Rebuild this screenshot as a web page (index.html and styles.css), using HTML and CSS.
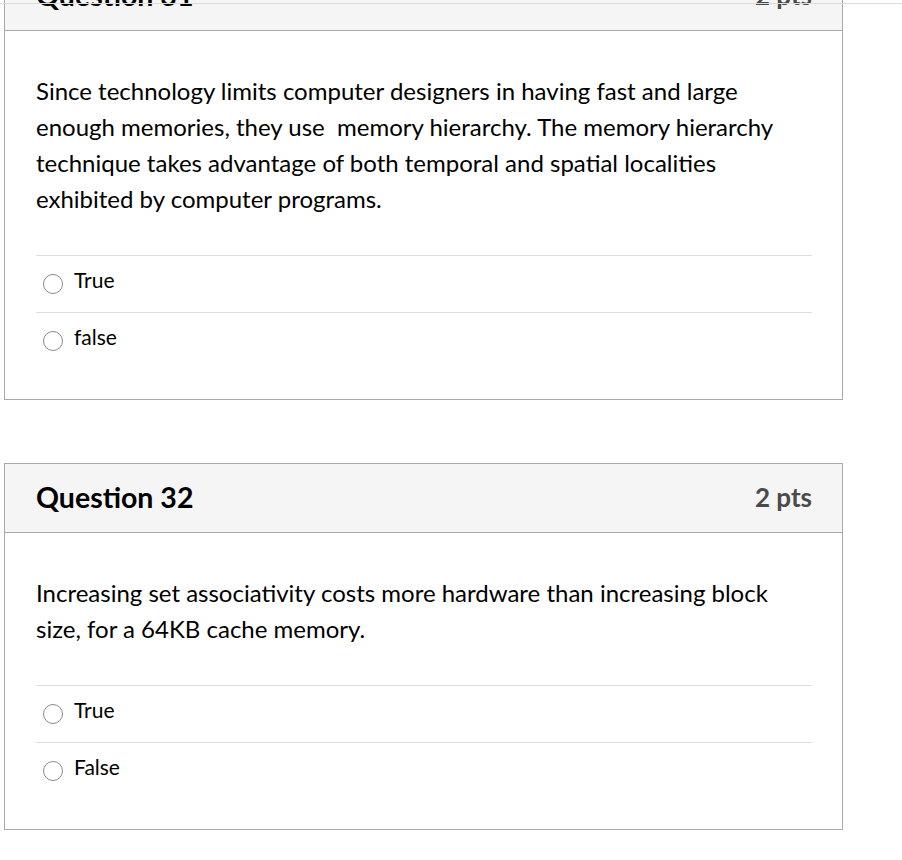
FILE: index.html
```html
<!DOCTYPE html>
<html>
<head>
<meta charset="utf-8">
<link rel="stylesheet" href="styles.css">
</head>
<body>
<div class="topbar"></div>
<div class="quiz">
  <div class="card first">
    <div class="card-header">
      <span class="title">Question 31</span>
      <span class="pts">2 pts</span>
    </div>
    <div class="card-body">
      <p class="question">Since technology limits computer designers in having fast and large enough memories, they use&nbsp; memory hierarchy. The memory hierarchy technique takes advantage of both temporal and spatial localities exhibited by computer programs.</p>
      <div class="answers">
        <label class="answer"><span class="radio"></span><span class="label">True</span></label>
        <label class="answer"><span class="radio"></span><span class="label">false</span></label>
      </div>
    </div>
  </div>
  <div class="card">
    <div class="card-header">
      <span class="title">Question 32</span>
      <span class="pts">2 pts</span>
    </div>
    <div class="card-body">
      <p class="question">Increasing set associativity costs more hardware than increasing block size, for a 64KB cache memory.</p>
      <div class="answers">
        <label class="answer"><span class="radio"></span><span class="label">True</span></label>
        <label class="answer"><span class="radio"></span><span class="label">False</span></label>
      </div>
    </div>
  </div>
</div>
</body>
</html>
```
FILE: styles.css
```css
html, body {
  margin: 0;
  padding: 0;
  background: #fff;
}
body {
  font-family: Lato, "Open Sans", sans-serif;
  color: #000;
  overflow: hidden;
}
.topbar {
  position: fixed;
  top: 3px;
  left: 0;
  right: 0;
  height: 1px;
  background: #dcdcdc;
  z-index: 2;
}
.quiz {
  padding-left: 4px;
  width: 839px;
  display: flex;
  flex-direction: column;
  gap: 63px;
}
.card {
  border: 1px solid #a8a8a8;
  background: #fff;
}
.card.first {
  margin-top: -39px;
}
.card-header {
  background: #f5f5f5;
  border-bottom: 1px solid #a8a8a8;
  height: 68px;
  display: flex;
  align-items: center;
  justify-content: space-between;
  padding: 0 30px 0 31px;
}
.title {
  font-size: 28.5px;
  font-weight: 700;
  color: #000;
  margin-bottom: 3px;
}
.pts {
  font-size: 26px;
  font-weight: 700;
  color: #4a4a4a;
  margin-bottom: 3px;
}
.card-body {
  padding: 42px 30px 30px 31px;
}
.question {
  margin: 0 0 38px 0;
  font-size: 24px;
  line-height: 36px;
}
.answers {
  display: flex;
  flex-direction: column;
}
.answer {
  display: flex;
  align-items: center;
  height: 56px;
  border-top: 1px solid #dddddd;
  padding-left: 7px;
  font-size: 21px;
}
.radio {
  width: 18px;
  height: 18px;
  border: 1px solid #8a8a8a;
  border-radius: 50%;
  margin-right: 11px;
  flex: none;
}
.label {
  line-height: 24px;
  margin-bottom: 8px;
}
```
